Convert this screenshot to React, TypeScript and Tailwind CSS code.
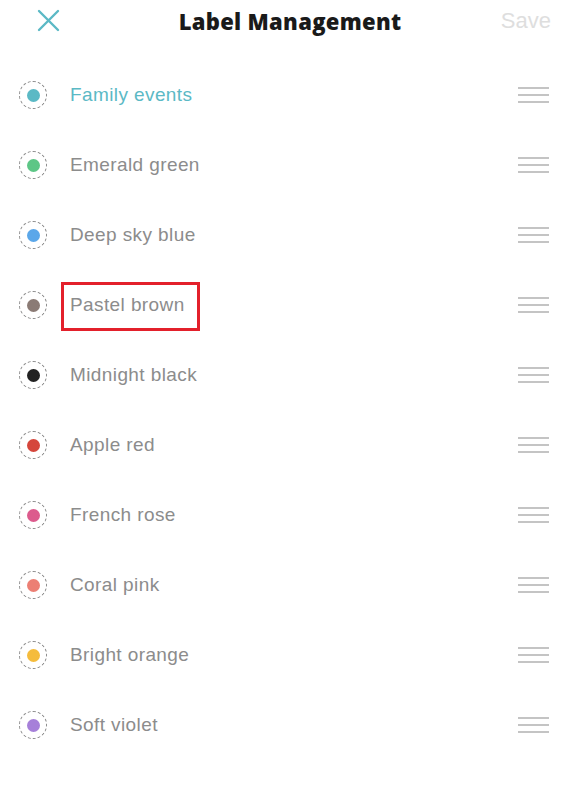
const labels = [
  { name: "Family events", color: "#5bb9c5", active: true },
  { name: "Emerald green", color: "#5dc686" },
  { name: "Deep sky blue", color: "#5ba7e9" },
  { name: "Pastel brown", color: "#8b7b75", marked: true },
  { name: "Midnight black", color: "#222222" },
  { name: "Apple red", color: "#d5463b" },
  { name: "French rose", color: "#dc5b8d" },
  { name: "Coral pink", color: "#ec7f74" },
  { name: "Bright orange", color: "#f5bc3c" },
  { name: "Soft violet", color: "#a680d9" },
];

const Handle = () => (
  <div className="flex w-[31px] flex-col gap-[5px]">
    <div className="h-[2px] bg-[#c4c4c4]" />
    <div className="h-[2px] bg-[#c4c4c4]" />
    <div className="h-[2px] bg-[#c4c4c4]" />
  </div>
);

export default function App() {
  return (
    <div
      className="h-[787px] w-[580px] bg-white"
      style={{ fontFamily: '"Liberation Sans", Arial, sans-serif' }}
    >
      <div className="relative flex h-[40px] items-center justify-between pl-[37px] pr-[29px]">
        <svg width="23" height="23" viewBox="0 0 23 23" className="mt-[1px]">
          <path d="M2 2 L21 21 M21 2 L2 21" stroke="#5bb9c5" strokeWidth="2.4" strokeLinecap="round" />
        </svg>
        <h1 className="absolute left-0 right-0 mt-[2px] text-center font-['Open_Sans',sans-serif] text-[22px] font-extrabold tracking-[0.3px] text-[#1a1a1a]">
          Label Management
        </h1>
        <span className="text-[22px] text-[#dedede]">Save</span>
      </div>

      <ul className="pt-[20px]">
        {labels.map((l) => (
          <li key={l.name} className="flex h-[70px] items-center pl-[19px] pr-[31px]">
            <div className="flex h-[28px] w-[28px] items-center justify-center rounded-full border border-dashed border-[#8a8a8a]">
              <div className="h-[13px] w-[13px] rounded-full" style={{ backgroundColor: l.color }} />
            </div>
            <div className="ml-[23px] flex-1">
              <span
                className={`relative text-[19px] tracking-[0.4px] ${l.active ? "text-[#5bb9c5]" : "text-[#8c8c8c]"}`}
              >
                {l.name}
                {l.marked && (
                  <span className="absolute -left-[9px] -right-[15px] -top-[12px] -bottom-[16px] border-[3px] border-[#e3202b]" />
                )}
              </span>
            </div>
            <Handle />
          </li>
        ))}
      </ul>
    </div>
  );
}
